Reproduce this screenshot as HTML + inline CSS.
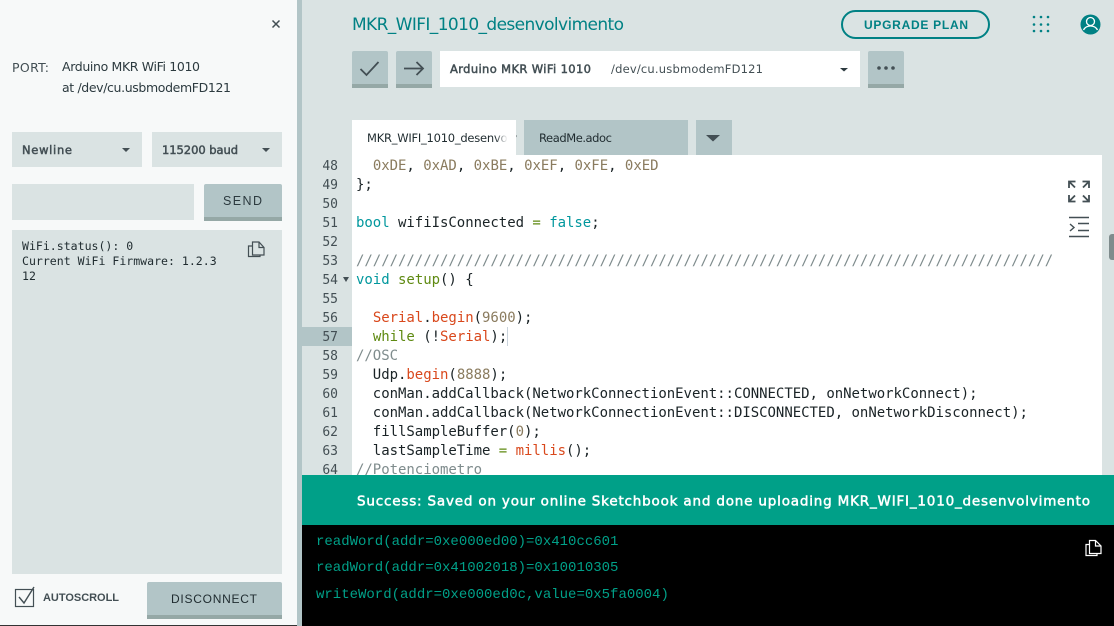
<!DOCTYPE html>
<html><head><meta charset="utf-8"><title>Arduino Web Editor</title>
<style>
html,body{margin:0;padding:0;width:1114px;height:626px;overflow:hidden;background:#dae3e3}
.a{position:absolute}
#code{position:absolute;left:302px;top:155px;width:800px;height:320px;overflow:hidden;background:#fff;font:14px/19px "DejaVu Sans Mono",monospace;color:#1a2326}
#gut{position:absolute;left:0;top:0;width:50px;height:320px;background:#dae3e3}
#hl{position:absolute;left:0;top:172px;width:50px;height:19px;background:#b2c5c7}
#nums{position:absolute;left:0;top:2px;width:36px;text-align:right;color:#434f54;font-size:13px}
#nums div{height:19px}
#lines{position:absolute;left:54px;top:2px;white-space:pre;letter-spacing:-.03px}
#lines div{height:19px}
.n{color:#8a7b5e}.k{color:#00979d}.f{color:#d9481c}.g{color:#5f8a12}.c{color:#7f8c8d}
.m{font:11.55px/15px "DejaVu Sans Mono",monospace;color:#1f2b2f;white-space:pre}
.b{font:14px/26.5px "Liberation Mono",monospace;color:#00a088;white-space:pre}
text{font-family:"DejaVu Sans",sans-serif}
text.l{font-family:"Liberation Sans",sans-serif}
</style></head><body>
<div class="a" style="left:0;top:0;width:297px;height:626px;background:#f7f9f9"></div>
<div class="a" style="left:297px;top:0;width:5px;height:626px;background:#b2c5c7"></div>
<div class="a" style="left:12px;top:132px;width:130px;height:35px;background:#dae3e3"></div>
<div class="a" style="left:152px;top:132px;width:130px;height:35px;background:#dae3e3"></div>
<div class="a" style="left:12px;top:184px;width:182px;height:36px;background:#dae3e3"></div>
<div class="a" style="left:204px;top:184px;width:78px;height:33px;background:#b2c5c7;border-bottom:4px solid #95a8a6;border-radius:2px 2px 0 0"></div>
<div class="a" style="left:12px;top:230px;width:270px;height:344px;background:#dae3e3"></div>
<div class="a m" style="left:22px;top:239px">WiFi.status(): 0
Current WiFi Firmware: 1.2.3
12</div>
<div class="a" style="left:147px;top:582px;width:135px;height:33px;background:#b2c5c7;border-bottom:4px solid #95a8a6;border-radius:2px 2px 0 0"></div>
<div class="a" style="left:352px;top:51px;width:36px;height:33px;background:#b2c5c7;border-bottom:4px solid #95a8a6;border-radius:2px 2px 0 0"></div>
<div class="a" style="left:396px;top:51px;width:36px;height:33px;background:#b2c5c7;border-bottom:4px solid #95a8a6;border-radius:2px 2px 0 0"></div>
<div class="a" style="left:868px;top:51px;width:36px;height:33px;background:#b2c5c7;border-bottom:4px solid #95a8a6;border-radius:2px 2px 0 0"></div>
<div class="a" style="left:440px;top:51px;width:420px;height:36px;background:#fff"></div>
<div class="a" style="left:352px;top:120px;width:164px;height:36px;background:#fff"></div>
<div class="a" style="left:524px;top:120px;width:164px;height:35px;background:#b2c5c7"></div>
<div class="a" style="left:696px;top:120px;width:36px;height:35px;background:#b2c5c7"></div>
<div id="code">
<div id="gut"></div><div id="hl"></div>
<div id="nums"><div>48</div><div>49</div><div>50</div><div>51</div><div>52</div><div>53</div><div>54</div><div>55</div><div>56</div><div>57</div><div>58</div><div>59</div><div>60</div><div>61</div><div>62</div><div>63</div><div>64</div></div>
<div id="lines"><div>  <span class="n">0xDE</span>, <span class="n">0xAD</span>, <span class="n">0xBE</span>, <span class="n">0xEF</span>, <span class="n">0xFE</span>, <span class="n">0xED</span></div><div>};</div><div> </div><div><span class="k">bool</span> wifiIsConnected <span class="g">=</span> <span class="k">false</span>;</div><div> </div><div class="c">///////////////////////////////////////////////////////////////////////////////////</div><div><span class="k">void</span> <span class="g">setup</span>() {</div><div> </div><div>  <span class="f">Serial</span>.<span class="f">begin</span>(<span class="n">9600</span>);</div><div>  <span class="g">while</span> (!<span class="f">Serial</span>);</div><div class="c">//OSC</div><div>  Udp.<span class="f">begin</span>(<span class="n">8888</span>);</div><div>  conMan.addCallback(NetworkConnectionEvent::CONNECTED, onNetworkConnect);</div><div>  conMan.addCallback(NetworkConnectionEvent::DISCONNECTED, onNetworkDisconnect);</div><div>  fillSampleBuffer(<span class="n">0</span>);</div><div>  lastSampleTime <span class="g">=</span> <span class="f">millis</span>();</div><div class="c">//Potenciometro</div></div>
</div>
<div class="a" style="left:507px;top:327px;width:1px;height:19px;background:#c9d3dc"></div>
<div class="a" style="left:1109px;top:234px;width:5px;height:26px;background:#7f8c8d;border-radius:3px 0 0 3px"></div>
<div class="a" style="left:302px;top:475px;width:812px;height:50px;background:#00a088"></div>
<div class="a" style="left:302px;top:525px;width:812px;height:101px;background:#000"></div>
<div class="a b" style="left:316px;top:528.500px">readWord(addr=0xe000ed00)=0x410cc601
readWord(addr=0x41002018)=0x10010305
writeWord(addr=0xe000ed0c,value=0x5fa0004)</div>
<div class="a" style="left:0;top:625px;width:297px;height:1px;background:#333"></div>

<svg class="a" style="left:0;top:0" width="1114" height="626" viewBox="0 0 1114 626">
<defs><linearGradient id="fd"><stop offset="0" stop-color="#fff" stop-opacity="0"/><stop offset=".6" stop-color="#fff"/></linearGradient></defs>
<path d="M272.500 20.500l7 7M279.500 20.500l-7 7" stroke="#434f54" stroke-width="1.500" fill="none"/>
<text x="12" y="72" font-size="12.500" fill="#434f54" textLength="37">PORT:</text>
<text x="62" y="71" font-size="12.500" fill="#2c3a3f" textLength="138">Arduino MKR WiFi 1010</text>
<text x="62" y="92" font-size="12.500" fill="#2c3a3f" textLength="169">at /dev/cu.usbmodemFD121</text>
<text x="22" y="154" font-size="11.500" stroke="#434f54" stroke-width=".5" fill="#434f54" textLength="50">Newline</text>
<text x="162" y="154" font-size="11.500" stroke="#434f54" stroke-width=".5" fill="#434f54" textLength="76">115200 baud</text>
<path d="M122 148h8l-4 4zM262 148h8l-4 4z" fill="#434f54"/>
<text class="l" x="223" y="205" font-size="12.500" fill="#2c3a3f" textLength="39">SEND</text>
<g fill="none" stroke="#434f54" stroke-width="1.200"><path d="M252.500 242h6.500l5 5.500v7.500h-11.500z"/><path d="M259 242v5.500h5"/><path d="M252.500 246h-4v10.500h11.500v-1.500"/></g>
<rect x="15.500" y="589.500" width="18" height="17" fill="none" stroke="#434f54" stroke-width="1.200"/>
<path d="M19 597l5 6 10-16" fill="none" stroke="#434f54" stroke-width="1.400"/>
<text class="l" x="43" y="601" font-size="11" font-weight="bold" fill="#434f54" textLength="76">AUTOSCROLL</text>
<text class="l" x="171" y="603" font-size="12" fill="#1f2b2f" textLength="86">DISCONNECT</text>
<text x="352" y="30" font-size="17" fill="#008184" textLength="272">MKR_WIFI_1010_desenvolvimento</text>
<rect x="842" y="11" width="147" height="27" rx="13.500" fill="none" stroke="#008184" stroke-width="2"/>
<text class="l" x="864" y="29" font-size="12" font-weight="bold" fill="#008184" textLength="104">UPGRADE PLAN</text>
<g fill="#008184"><circle cx="1034" cy="17" r="1.300"/><circle cx="1041" cy="17" r="1.300"/><circle cx="1048" cy="17" r="1.300"/><circle cx="1034" cy="24.500" r="1.300"/><circle cx="1041" cy="24.500" r="1.300"/><circle cx="1048" cy="24.500" r="1.300"/><circle cx="1034" cy="31" r="1.300"/><circle cx="1041" cy="31" r="1.300"/><circle cx="1048" cy="31" r="1.300"/></g>
<circle cx="1090.500" cy="24.500" r="10" fill="#008184"/>
<circle cx="1090.500" cy="21.500" r="4" fill="none" stroke="#fff" stroke-width="1.300"/>
<path d="M1083.500 30c1.500-3 4-4 7-4s5.500 1 7 4" fill="none" stroke="#fff" stroke-width="1.300"/>
<path d="M360.500 69l6 6 12-13" fill="none" stroke="#434f54" stroke-width="1.800"/>
<path d="M404 68.500h19M416.500 62l6.500 6.500-6.500 6.500" fill="none" stroke="#434f54" stroke-width="1.800"/>
<text x="450" y="73" font-size="11.500" stroke="#434f54" stroke-width=".5" fill="#434f54" textLength="141">Arduino MKR WiFi 1010</text>
<text x="611" y="73" font-size="11.500" fill="#434f54" textLength="152">/dev/cu.usbmodemFD121</text>
<path d="M840 68h8l-4 3.500z" fill="#2c3a3f"/>
<g fill="#434f54"><circle cx="879" cy="68" r="1.800"/><circle cx="886" cy="68" r="1.800"/><circle cx="893" cy="68" r="1.800"/></g>
<text x="367" y="142" font-size="11.500" fill="#1f2b2f" textLength="150">MKR_WIFI_1010_desenvolv</text>
<rect x="495" y="128" width="21" height="20" fill="url(#fd)"/>
<text x="539" y="142" font-size="11.500" fill="#1f2b2f" textLength="73">ReadMe.adoc</text>
<path d="M706 135h14l-7 6.500z" fill="#434f54"/>
<path d="M343 277h6l-3 5z" fill="#434f54"/>
<g fill="none" stroke="#434f54" stroke-width="1.800"><path d="M1069 188v-6.500h6.500M1070 182.500l5 5M1089 188v-6.500h-6.500M1088 182.500l-5 5M1069 195v6.500h6.500M1070 200.500l5-5M1089 195v6.500h-6.500M1088 200.500l-5-5"/></g>
<g fill="none" stroke="#434f54" stroke-width="1.400"><path d="M1069 217.500h20M1078 223.500h11M1078 230.500h11M1069 236.500h20M1070 224l4 3.500-4 3.500"/></g>
<text x="357" y="505.500" font-size="13.500" stroke="#fff" stroke-width=".5" fill="#fff" textLength="733">Success: Saved on your online Sketchbook and done uploading MKR_WIFI_1010_desenvolvimento</text>
<g fill="none" stroke="#fff" stroke-width="1.200"><path d="M1089.500 540.500h6l5.500 5.500v7.500h-11.500z"/><path d="M1095.500 540.500v5.500h5.500"/><path d="M1089.500 544.500h-3.500v11h11v-2"/></g>
</svg>
</body></html>
